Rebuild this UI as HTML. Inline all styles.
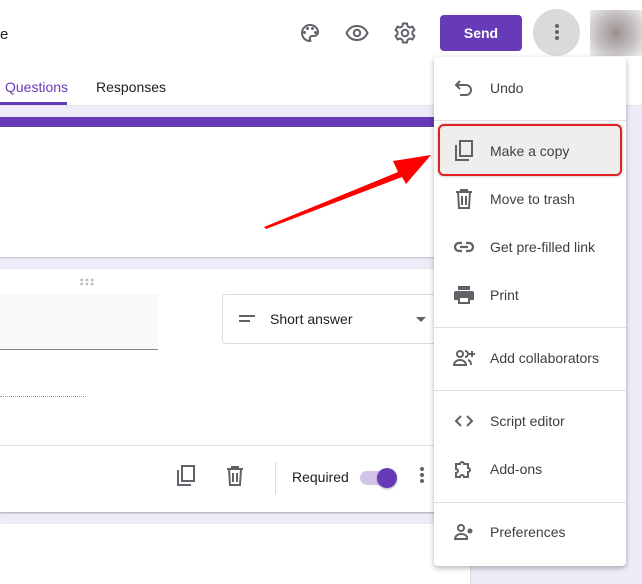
<!DOCTYPE html>
<html><head><meta charset="utf-8"><style>
*{margin:0;padding:0;box-sizing:border-box}
body{width:642px;height:584px;overflow:hidden;position:relative;background:#fff;font-family:"Liberation Sans",sans-serif;color:#202124}
.a{position:absolute}
.mi{position:absolute;left:434px;width:192px;height:48px;font-size:14px;color:#3c4043}
.mi svg{position:absolute;left:18px;top:12px}
.mi span{position:absolute;left:56px;top:16px}
.sep{position:absolute;left:434px;width:192px;height:1px;background:#e0e0e0}
</style></head><body>
<div class="a" style="left:0;top:26px;font-size:15px">e</div>
<svg class="a" style="left:298px;top:21px" width="24" height="24" viewBox="0 0 24 24"><path fill="#5f6368" d="M12 3a9 9 0 0 0 0 18c.83 0 1.5-.67 1.5-1.5 0-.39-.15-.74-.39-1.01-.23-.26-.38-.61-.38-.99 0-.83.67-1.5 1.5-1.5H16c2.76 0 5-2.24 5-5 0-4.42-4.03-8-9-8zm0 16a7 7 0 0 1 0-14c3.86 0 7 2.69 7 6 0 1.65-1.35 3-3 3h-1.77a3.5 3.5 0 0 0-2.610 5.82A.5.5 0 0 1 12 19z"/><circle fill="#5f6368" cx="6.5" cy="11.5" r="1.5"/><circle fill="#5f6368" cx="9.5" cy="7.5" r="1.5"/><circle fill="#5f6368" cx="14.5" cy="7.5" r="1.5"/><circle fill="#5f6368" cx="17.5" cy="11.5" r="1.5"/></svg>
<svg class="a" style="left:345px;top:21px" width="24" height="24" viewBox="0 0 24 24"><path fill="none" stroke="#5f6368" stroke-width="2" d="M1.5 12C4 7 8 5 12 5s8 2 10.5 7C20 17 16 19 12 19s-8-2-10.5-7z"/><circle cx="12" cy="12" r="3.2" fill="none" stroke="#5f6368" stroke-width="2"/></svg>
<svg class="a" style="left:393px;top:21px" width="24" height="24" viewBox="0 0 24 24"><path fill="none" stroke="#5f6368" stroke-width="2" d="M10 2.5h4l.6 2.7 2.2 1.3 2.6-.9 2 3.4-2 1.9v2.2l2 1.9-2 3.4-2.6-.9-2.2 1.3-.6 2.7h-4l-.6-2.7-2.2-1.3-2.6.9-2-3.4 2-1.9v-2.2l-2-1.9 2-3.4 2.6.9 2.2-1.3z"/><circle cx="12" cy="12" r="3.3" fill="none" stroke="#5f6368" stroke-width="2"/></svg>
<div class="a" style="left:440px;top:15px;width:82px;height:36px;background:#673ab7;border-radius:4px;color:#fff;font-weight:bold;font-size:14px;text-align:center;line-height:36px">Send</div>
<div class="a" style="left:533px;top:9px;width:47px;height:47px;border-radius:50%;background:#dadada"></div>
<div class="a" style="left:555px;top:24px;width:4px;height:4px;border-radius:50%;background:#5f6368;box-shadow:0 6px 0 #5f6368,0 12px 0 #5f6368"></div>
<div class="a" style="left:590px;top:10px;width:52px;height:46px;background:radial-gradient(circle at 50% 50%,#9a8f8f 0,#c9c5c5 60%,#eee 100%)"></div>
<div class="a" style="left:5px;top:79px;font-size:14px;color:#673ab7">Questions</div>
<div class="a" style="left:96px;top:79px;font-size:14px;color:#202124">Responses</div>
<div class="a" style="left:0;top:102px;width:67px;height:3px;background:#673ab7"></div>
<div class="a" style="left:0;top:105px;width:642px;height:479px;background:#f0ebf8;border-top:1px solid #e0e0e0"></div>
<div class="a" style="left:0;top:117px;width:470px;height:140px;background:#fff;border-radius:0 8px 8px 0;box-shadow:0 1px 2px rgba(0,0,0,.2)"></div>
<div class="a" style="left:0;top:117px;width:470px;height:10px;background:#673ab7"></div>
<div class="a" style="left:0;top:269px;width:470px;height:243px;background:#fff;box-shadow:0 1px 2px rgba(0,0,0,.3)"></div>
<div class="a" style="left:79px;top:278px;width:16px;height:8px;background:radial-gradient(circle,#bbb 1.2px,transparent 1.5px) 0 0/5.3px 4px"></div>
<div class="a" style="left:0;top:294px;width:158px;height:56px;background:#f8f9fa;border-bottom:1px solid #80868b"></div>
<div class="a" style="left:222px;top:294px;width:220px;height:50px;border:1px solid #dadce0;border-radius:4px"></div>
<div class="a" style="left:239px;top:315px;width:16px;height:2px;background:#5f6368"></div>
<div class="a" style="left:239px;top:320px;width:11px;height:2px;background:#5f6368"></div>
<div class="a" style="left:270px;top:311px;font-size:14px">Short answer</div>
<div class="a" style="left:416px;top:317px;border:5px solid transparent;border-top-color:#5f6368"></div>
<div class="a" style="left:0;top:396px;width:86px;border-top:1px dotted #999"></div>
<div class="a" style="left:0;top:445px;width:470px;height:1px;background:#e0e0e0"></div>
<svg class="a" style="left:174px;top:464px" width="24" height="24" viewBox="0 0 24 24"><path fill="none" stroke="#5f6368" stroke-width="2" d="M4 6v15h13M8 2h12v15H8z"/></svg>
<svg class="a" style="left:223px;top:464px" width="24" height="24" viewBox="0 0 24 24"><path fill="none" stroke="#5f6368" stroke-width="2" d="M4 5h16M9 5V3h6v2M6 5l1 16h10l1-16M10 9v9M14 9v9"/></svg>
<div class="a" style="left:275px;top:462px;width:1px;height:32px;background:#dadce0"></div>
<div class="a" style="left:292px;top:469px;font-size:14px">Required</div>
<div class="a" style="left:360px;top:471px;width:34px;height:14px;border-radius:7px;background:#d1c4e9"></div>
<div class="a" style="left:377px;top:468px;width:20px;height:20px;border-radius:50%;background:#673ab7;box-shadow:0 1px 2px rgba(0,0,0,.3)"></div>
<div class="a" style="left:420px;top:467px;width:4px;height:4px;border-radius:50%;background:#5f6368;box-shadow:0 6px 0 #5f6368,0 12px 0 #5f6368"></div>
<div class="a" style="left:0;top:524px;width:470px;height:60px;background:#fff;box-shadow:0 1px 2px rgba(0,0,0,.2)"></div>
<svg class="a" style="left:260px;top:148px" width="175" height="85" viewBox="0 0 175 85"><path fill="#f00" d="M4 79 L138 24 L133 13 L171 7 L146 36 L142 29 L6 81z"/></svg>
<div class="a" style="left:434px;top:57px;width:192px;height:509px;background:#fff;border-radius:4px;box-shadow:0 2px 6px rgba(0,0,0,.3)"></div>
<div class="mi" style="top:64px"><svg width="24" height="24" viewBox="0 0 24 24"><path fill="none" stroke="#5f6368" stroke-width="2" d="M8 5L4 9l4 4M4 9h10a5 5 0 0 1 0 10H8"/></svg><span>Undo</span></div>
<div class="sep" style="top:120px"></div>
<div class="a" style="left:438px;top:124px;width:184px;height:52px;background:#eee;border:2px solid #e02020;border-radius:6px;box-shadow:0 0 3px rgba(0,0,0,.3)"></div>
<div class="mi" style="top:127px"><svg width="24" height="24" viewBox="0 0 24 24"><path fill="none" stroke="#5f6368" stroke-width="2" d="M4 6v15h13M8 2h12v15H8z"/></svg><span>Make a copy</span></div>
<div class="mi" style="top:175px"><svg width="24" height="24" viewBox="0 0 24 24"><path fill="none" stroke="#5f6368" stroke-width="2" d="M4 5h16M9 5V3h6v2M6 5l1 16h10l1-16M10 9v9M14 9v9"/></svg><span>Move to trash</span></div>
<div class="mi" style="top:223px"><svg width="24" height="24" viewBox="0 0 24 24"><path fill="none" stroke="#5f6368" stroke-width="2.2" d="M10 8H7a4 4 0 0 0 0 8h3M14 8h3a4 4 0 0 1 0 8h-3M8 12h8"/></svg><span>Get pre-filled link</span></div>
<div class="mi" style="top:271px"><svg width="24" height="24" viewBox="0 0 24 24"><path fill="#5f6368" d="M6 3h12v4H6zM4 8h16a2 2 0 0 1 2 2v7h-4v4H6v-4H2v-7a2 2 0 0 1 2-2zm4 7v4h8v-4z"/></svg><span>Print</span></div>
<div class="sep" style="top:327px"></div>
<div class="mi" style="top:334px"><svg width="24" height="24" viewBox="0 0 24 24"><circle cx="8" cy="8" r="3" fill="none" stroke="#5f6368" stroke-width="2"/><path fill="none" stroke="#5f6368" stroke-width="2" d="M2 19c0-3 3-5 6-5s6 2 6 5zM13 5a3 3 0 0 1 0 6M16 14c2 .5 3 2 3 5M20 5v6M17 8h6"/></svg><span>Add collaborators</span></div>
<div class="sep" style="top:390px"></div>
<div class="mi" style="top:397px"><svg width="24" height="24" viewBox="0 0 24 24"><path fill="none" stroke="#5f6368" stroke-width="2" d="M9 7l-5 5 5 5M15 7l5 5-5 5"/></svg><span>Script editor</span></div>
<div class="mi" style="top:445px"><svg width="24" height="24" viewBox="0 0 24 24"><path fill="none" stroke="#5f6368" stroke-width="2" d="M4 7h4a2 2 0 0 1 4 0h4v4a2 2 0 0 1 0 4v5h-4a2 2 0 0 0-4 0H4v-4a2 2 0 0 0 0-4z"/></svg><span>Add-ons</span></div>
<div class="sep" style="top:502px"></div>
<div class="mi" style="top:508px"><svg width="24" height="24" viewBox="0 0 24 24"><circle cx="9" cy="8" r="3" fill="none" stroke="#5f6368" stroke-width="2"/><path fill="none" stroke="#5f6368" stroke-width="2" d="M3 19c0-3 3-5 6-5s5 1 6 3v2z"/><circle cx="18" cy="11" r="2.5" fill="#5f6368"/></svg><span>Preferences</span></div>
</body></html>
